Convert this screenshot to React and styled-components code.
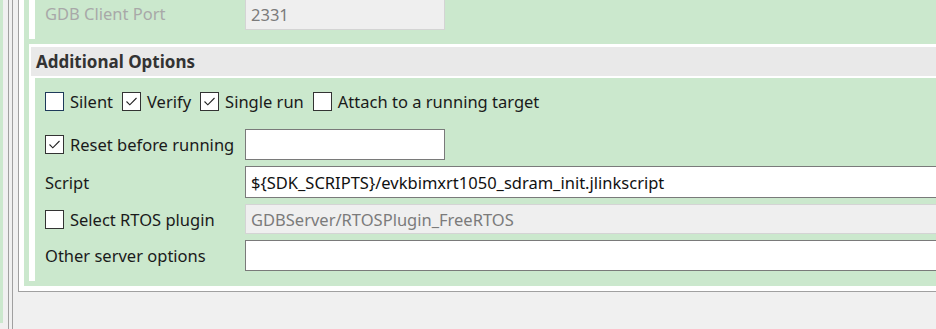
import React from "react";
import styled, { createGlobalStyle } from "styled-components";

const GREEN = "#cbe8cd";
const LINE = "#a0a0a0";

const Global = createGlobalStyle`
  html, body {
    margin: 0;
    padding: 0;
    background: #f0f0f0;
    overflow: hidden;
  }
  body {
    font-family: "Noto Sans", "Segoe UI", sans-serif;
    font-size: 16.5px;
    color: #1a1a1a;
  }
`;

const Shell = styled.div`
  display: flex;
  width: 936px;
  height: 329px;
  overflow: hidden;
`;

const GreenEdge = styled.div`
  flex: 0 0 3px;
  height: 323px;
  background: ${GREEN};
`;

const Rail = styled.div`
  flex: 1;
  display: flex;
  margin-left: ${(p) => p.$gap}px;
  padding-left: ${(p) => p.$pad}px;
  border-left: 1px solid ${LINE};
  min-width: 0;
`;

const TabPanel = styled.div`
  flex: 1;
  align-self: flex-start;
  background: #fff;
  border-left: 1px solid ${LINE};
  border-bottom: 1px solid ${LINE};
  padding: 0 0 5px 5px;
  min-width: 0;
`;

const Pane = styled.div`
  background: ${GREEN};
  padding: 0 0 5px 5px;
`;

const TopGroup = styled.div`
  border-left: 6px solid #fff;
  height: 39px;
  display: flex;
  align-items: flex-start;
  padding-left: 10px;
`;

const GroupHeader = styled.div`
  margin-top: 5px;
  border-top: 3px solid #fff;
  border-bottom: 2px solid #fff;
  border-left: 2px solid #fff;
  background: #e9e9e9;
  height: 29px;
  padding-left: 5px;
  display: flex;
  align-items: center;
  font-weight: 700;
  font-size: 17px;
  color: #333;
`;

const Group = styled.div`
  border-left: 6px solid #fff;
  padding: 14px 0 10px 10px;
  display: grid;
  grid-template-columns: 200px 1fr;
  align-items: center;
  row-gap: 6px;
`;

const CheckRow = styled.div`
  grid-column: 1 / -1;
  display: flex;
  align-items: center;
  gap: 9px;
  height: 19px;
  margin-bottom: 12px;
`;

const CheckLabel = styled.label`
  display: flex;
  align-items: center;
  gap: 6px;
  white-space: nowrap;
  color: ${(p) => (p.$muted ? "#a3a3a3" : "#1a1a1a")};
`;

const Box = styled.span`
  width: 17px;
  height: 17px;
  border: 1px solid ${(p) => (p.$focus ? "#1e3a5a" : "#333")};
  background: #fff;
  display: inline-flex;
  align-items: center;
  justify-content: center;
  flex: 0 0 auto;
`;

const Label = styled.span`
  white-space: nowrap;
  color: ${(p) => (p.$muted ? "#a8a8a8" : "#1a1a1a")};
`;

const Field = styled.div`
  height: ${(p) => p.$h || 29}px;
  border: 1px solid ${(p) => (p.$disabled ? "#d4d4d4" : "#7a7a7a")};
  background: ${(p) => (p.$disabled ? "#efefef" : "#fff")};
  color: ${(p) => (p.$disabled ? "#7b7b7b" : "#111")};
  width: ${(p) => (p.$w ? `${p.$w}px` : "760px")};
  padding-left: 5px;
  display: flex;
  align-items: center;
  white-space: nowrap;
  box-sizing: border-box;
`;

const TopField = styled(Field)`
  margin-top: -1px;
  margin-left: 200px;
`;

const TopLabel = styled(Label)`
  position: absolute;
  margin-top: 2px;
`;

function Check({ checked, focus }) {
  return (
    <Box $focus={focus}>
      {checked && (
        <svg width="13" height="13" viewBox="0 0 13 13">
          <polyline
            points="1.5,6.5 4.8,9.8 11.5,3"
            fill="none"
            stroke="#222"
            strokeWidth="1.1"
          />
        </svg>
      )}
    </Box>
  );
}

export default function App() {
  return (
    <>
      <Global />
      <Shell>
        <GreenEdge />
        <Rail $gap={5} $pad={3}>
          <Rail $gap={0} $pad={5}>
            <TabPanel>
              <Pane>
                <TopGroup>
                  <TopLabel $muted>GDB Client Port</TopLabel>
                  <TopField $disabled $w={200} $h={31}>
                    2331
                  </TopField>
                </TopGroup>
                <GroupHeader>Additional Options</GroupHeader>
                <Group>
                  <CheckRow>
                    <CheckLabel>
                      <Check focus />
                      Silent
                    </CheckLabel>
                    <CheckLabel>
                      <Check checked />
                      Verify
                    </CheckLabel>
                    <CheckLabel>
                      <Check checked />
                      Single run
                    </CheckLabel>
                    <CheckLabel>
                      <Check />
                      Attach to a running target
                    </CheckLabel>
                  </CheckRow>

                  <CheckLabel>
                    <Check checked />
                    Reset before running
                  </CheckLabel>
                  <Field $w={200} $h={31} />

                  <Label>Script</Label>
                  <Field $h={32}>
                    {"${SDK_SCRIPTS}/evkbimxrt1050_sdram_init.jlinkscript"}
                  </Field>

                  <CheckLabel>
                    <Check />
                    Select RTOS plugin
                  </CheckLabel>
                  <Field $disabled $h={30}>
                    GDBServer/RTOSPlugin_FreeRTOS
                  </Field>

                  <Label>Other server options</Label>
                  <Field $h={31} />
                </Group>
              </Pane>
            </TabPanel>
          </Rail>
        </Rail>
      </Shell>
    </>
  );
}
